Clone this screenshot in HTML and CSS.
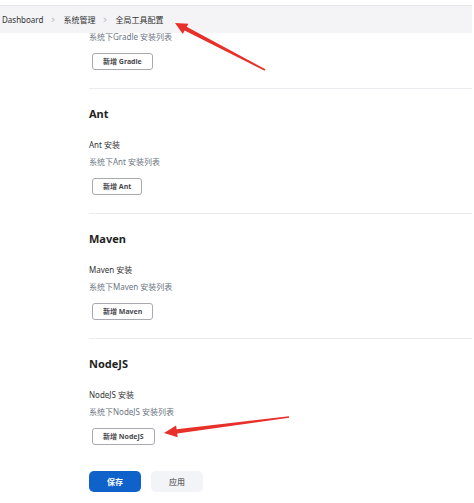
FILE: index.html
```html
<!DOCTYPE html>
<html lang="zh-CN">
<head>
<meta charset="utf-8">
<title>全局工具配置</title>
<link rel="stylesheet" href="styles.css">
</head>
<body>
<div class="page">
  <div class="topgap"></div>
  <nav class="breadcrumb">
    <span class="crumb">Dashboard</span>
    <span class="sep">&gt;</span>
    <span class="crumb">系统管理</span>
    <span class="sep">&gt;</span>
    <span class="crumb">全局工具配置</span>
  </nav>
  <main class="content">
    <section class="tool tool-partial">
      <div class="desc">系统下Gradle 安装列表</div>
      <button class="add-btn">新增 Gradle</button>
    </section>
    <section class="tool">
      <h2 class="title">Ant</h2>
      <div class="label">Ant 安装</div>
      <div class="desc">系统下Ant 安装列表</div>
      <button class="add-btn">新增 Ant</button>
    </section>
    <section class="tool">
      <h2 class="title">Maven</h2>
      <div class="label">Maven 安装</div>
      <div class="desc">系统下Maven 安装列表</div>
      <button class="add-btn">新增 Maven</button>
    </section>
    <section class="tool tool-last">
      <h2 class="title">NodeJS</h2>
      <div class="label">NodeJS 安装</div>
      <div class="desc">系统下NodeJS 安装列表</div>
      <button class="add-btn">新增 NodeJS</button>
    </section>
    <div class="actions">
      <button class="btn-save">保存</button>
      <button class="btn-apply">应用</button>
    </div>
  </main>
  <svg class="annot" width="474" height="503" viewBox="0 0 474 503">
    <polygon fill="#e8302a" points="175,23 188.5,23.7 186.6,26.8 265.4,69.3 264.6,70.7 184.6,30.4 182.8,34.1"/>
    <polygon fill="#e8302a" points="164,433 176.1,425.4 176.6,429.2 288.9,416.2 289.1,417.8 177.2,433.6 177.7,437.3"/>
  </svg>
</div>
</body>
</html>
```
FILE: styles.css
```css
html, body {
  margin: 0;
  padding: 0;
  background: #ffffff;
}
body {
  font-family: "Noto Sans", "Noto Sans CJK SC", sans-serif;
  color: #333;
}
.page {
  position: relative;
  width: 474px;
  height: 503px;
  overflow: hidden;
}
.topgap {
  height: 5px;
  width: 472px;
  border-bottom: 1px solid #e6e6ea;
}
.breadcrumb {
  width: 470px;
  height: 27px;
  background: #f4f4f7;
  display: flex;
  align-items: center;
  padding-left: 2px;
  font-size: 8px;
  color: #333;
  position: relative;
  z-index: 1;
}
.crumb {
  line-height: 12px;
}
.breadcrumb .sep {
  color: #aaa;
  width: 20px;
  text-align: center;
  font-size: 8px;
  transform: scaleX(0.7);
}
.content {
  margin-left: 89px;
  width: 383px;
}
.tool {
  border-bottom: 1px solid #ececf0;
  padding-top: 17px;
  padding-bottom: 18px;
  display: flex;
  flex-direction: column;
  align-items: flex-start;
}
.tool-partial {
  padding-top: 0;
  margin-top: -2px;
}
.tool-last {
  border-bottom: none;
  padding-bottom: 0;
}
.title {
  margin: 0;
  font-size: 11px;
  font-weight: 700;
  line-height: 16px;
  color: #1f1f24;
  margin-bottom: 17px;
}
.label {
  font-size: 8px;
  line-height: 12px;
  color: #333;
  margin-bottom: 5px;
}
.desc {
  font-size: 8px;
  line-height: 12px;
  color: #6c7683;
  margin-bottom: 10px;
}
.add-btn {
  margin-left: 3px;
  height: 17px;
  padding: 0 10px;
  border: 1px solid #a6aab0;
  border-radius: 3px;
  background: #fff;
  font-family: "Noto Sans", "Noto Sans CJK SC", sans-serif;
  font-size: 7px;
  font-weight: 700;
  color: #4a4a4f;
  line-height: 15px;
}
.actions {
  display: flex;
  gap: 10px;
  margin-top: 26px;
}
.btn-save, .btn-apply {
  width: 52px;
  height: 21px;
  border: none;
  border-radius: 5px;
  font-family: "Noto Sans", "Noto Sans CJK SC", sans-serif;
  font-size: 8px;
  padding: 0;
}
.btn-save {
  background: #0f62c9;
  color: #fff;
  font-weight: 700;
}
.btn-apply {
  background: #f3f4f8;
  color: #333;
}
.annot {
  position: absolute;
  left: 0;
  top: 0;
  pointer-events: none;
  z-index: 2;
}
```
